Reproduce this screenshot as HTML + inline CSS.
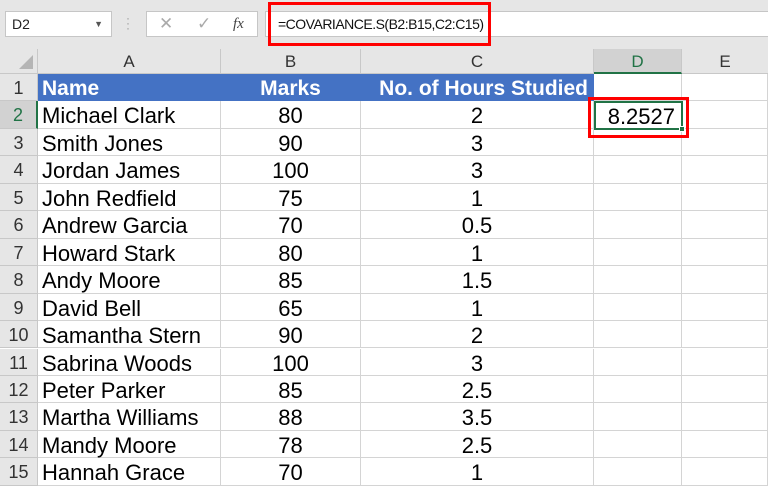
<!DOCTYPE html>
<html><head><style>
*{margin:0;padding:0;box-sizing:border-box}
body{width:768px;height:485px;overflow:hidden;background:#fff;font-family:"Liberation Sans",Arial,sans-serif;position:relative}
.a{position:absolute}
.top{left:0;top:0;width:768px;height:49px;background:#e6e6e6}
.box{background:#fff;border:1px solid #c6c6c6}
.ch{top:49px;height:25px;background:#e6e6e6;border-right:1px solid #c8c8c8;border-bottom:1px solid #c8c8c8;text-align:center;font-size:17px;line-height:25px;color:#333}
.rh{left:0;width:38px;background:#e6e6e6;border-bottom:1px solid #c8c8c8;border-right:1px solid #c8c8c8;text-align:center;font-size:18px;color:#333}
.c{border-right:1px solid #d4d4d4;border-bottom:1px solid #d4d4d4;font-size:22px;color:#000;white-space:nowrap;overflow:visible}
</style></head><body>
<div class="a top"></div>
<div class="a box" style="left:5px;top:11px;width:107px;height:26px;font-size:14px;line-height:24px;padding-left:6px;color:#222">D2<span style="position:absolute;right:8px;top:0;font-size:9px;color:#555">▼</span></div>
<div class="a" style="left:126px;top:16px;color:#999;font-size:12px;line-height:5px">·<br>·<br>·</div>
<div class="a box" style="left:146px;top:11px;width:112px;height:26px;color:#aaa;font-size:17px;line-height:24px"><span style="position:absolute;left:12px">✕</span><span style="position:absolute;left:50px">✓</span><span style="position:absolute;left:86px;color:#444;font-style:italic;font-family:'Liberation Serif',serif;font-size:15px">fx</span></div>
<div class="a box" style="left:265px;top:11px;width:510px;height:26px;font-size:14px;line-height:24px;padding-left:12px;color:#111;letter-spacing:-0.5px">=COVARIANCE.S(B2:B15,C2:C15)</div>
<div class="a" style="left:268px;top:2px;width:223px;height:44px;border:3px solid #f00"></div>

<div class="a" style="left:0;top:49px;width:38px;height:25px;background:#e6e6e6;border-right:1px solid #c8c8c8;border-bottom:1px solid #c8c8c8"><div style="position:absolute;right:4px;bottom:4px;width:0;height:0;border-left:14px solid transparent;border-bottom:14px solid #b5b5b5"></div></div>
<div class="a ch" style="left:38px;width:183px">A</div>
<div class="a ch" style="left:221px;width:140px">B</div>
<div class="a ch" style="left:361px;width:233px">C</div>
<div class="a ch" style="left:594px;width:88px;background:#d2d2d2;border-bottom:2px solid #217346;color:#217346">D</div>
<div class="a ch" style="left:682px;width:86px;border-right:none">E</div>

<div id="g"></div>
<script>
var rows=[["Name","Marks","No. of Hours Studied"],["Michael Clark","80","2"],["Smith Jones","90","3"],["Jordan James","100","3"],["John Redfield","75","1"],["Andrew Garcia","70","0.5"],["Howard Stark","80","1"],["Andy Moore","85","1.5"],["David Bell","65","1"],["Samantha Stern","90","2"],["Sabrina Woods","100","3"],["Peter Parker","85","2.5"],["Martha Williams","88","3.5"],["Mandy Moore","78","2.5"],["Hannah Grace","70","1"]];
var h="";var cols=[[38,183],[221,140],[361,233],[594,88],[682,86]];
for(var i=0;i<15;i++){var t=74+i*27.45;var hh=27.45;
var sel=i==1;
h+='<div class="a rh" style="top:'+t+'px;height:'+hh+'px;line-height:'+(hh+2)+'px;'+(sel?'background:#d2d2d2;color:#217346;border-right:2px solid #217346':'')+'">'+(i+1)+'</div>';
for(var j=0;j<5;j++){var v=j<3?rows[i][j]:"";var st='left:'+cols[j][0]+'px;top:'+t+'px;width:'+cols[j][1]+'px;height:'+hh+'px;line-height:'+(hh+3)+'px;';
if(i==0&&j<3)st+='background:#4472c4;color:#fff;font-weight:bold;border-color:#4472c4;font-size:21px;';
st+=j==0?'padding-left:4px;':j<3?'text-align:center;':'';
if(i==0&&j==2)st+='text-align:right;padding-right:5px;';
h+='<div class="a c" style="'+st+'">'+v+'</div>';}}
document.getElementById('g').innerHTML=h;
</script>
<div class="a" style="left:594px;top:101px;width:89px;height:29px;border:2px solid #217346;font-size:22px;line-height:27px;text-align:right;padding-right:6px">8.2527</div>
<div class="a" style="left:679px;top:126px;width:6px;height:6px;background:#217346;border:1px solid #fff"></div>
<div class="a" style="left:588px;top:97px;width:101px;height:41px;border:3px solid #f00"></div>
</body></html>
